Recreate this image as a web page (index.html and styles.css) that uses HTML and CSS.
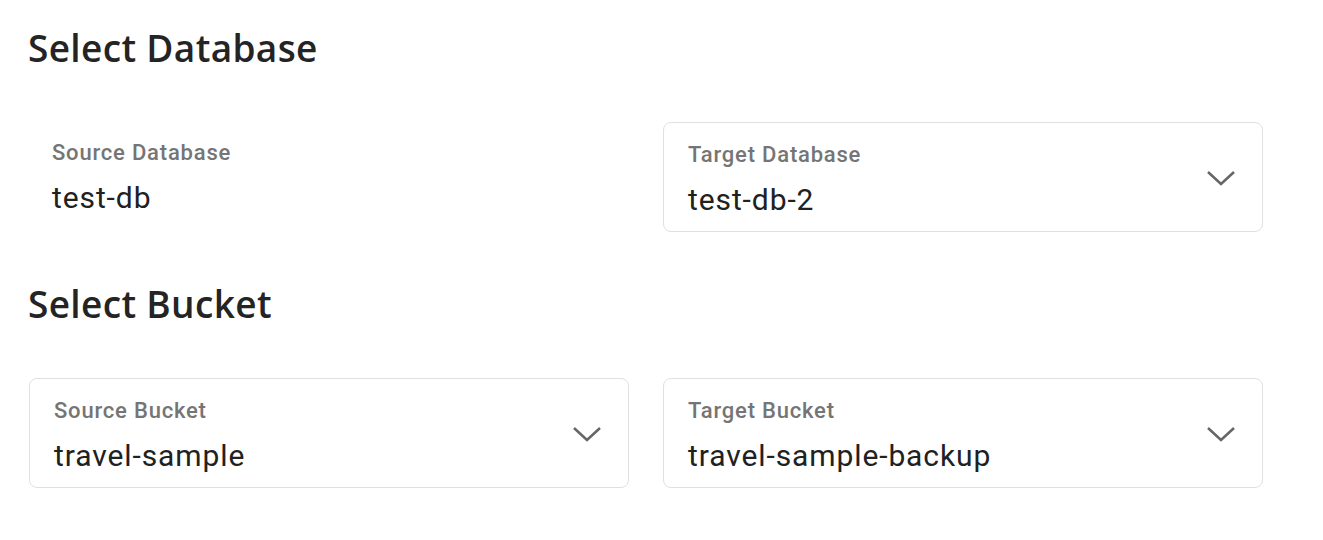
FILE: index.html
```html
<!DOCTYPE html>
<html lang="en">
<head>
    <meta charset="UTF-8">
    <meta name="viewport" content="width=device-width, initial-scale=1.0">
    <title>Select Database</title>
    <link rel="stylesheet" href="styles.css">
</head>
<body>
    <div class="page">
        <!-- Database -->
        <h2 class="section-title">Select Database</h2>
        <div class="row">
            <div class="field field-static">
                <div class="field-text">
                    <span class="field-label">Source Database</span>
                    <span class="field-value">test-db</span>
                </div>
            </div>
            <div class="field field-select">
                <div class="field-text">
                    <span class="field-label">Target Database</span>
                    <span class="field-value">test-db-2</span>
                </div>
                <svg class="chevron" width="30" height="16" viewBox="0 0 30 16"><path d="M2 2 L15 14 L28 2" fill="none" stroke="#666" stroke-width="2.5"/></svg>
            </div>
        </div>

        <!-- Bucket -->
        <h2 class="section-title">Select Bucket</h2>
        <div class="row">
            <div class="field field-select">
                <div class="field-text">
                    <span class="field-label">Source Bucket</span>
                    <span class="field-value">travel-sample</span>
                </div>
                <svg class="chevron" width="30" height="16" viewBox="0 0 30 16"><path d="M2 2 L15 14 L28 2" fill="none" stroke="#666" stroke-width="2.5"/></svg>
            </div>
            <div class="field field-select">
                <div class="field-text">
                    <span class="field-label">Target Bucket</span>
                    <span class="field-value">travel-sample-backup</span>
                </div>
                <svg class="chevron" width="30" height="16" viewBox="0 0 30 16"><path d="M2 2 L15 14 L28 2" fill="none" stroke="#666" stroke-width="2.5"/></svg>
            </div>
        </div>
    </div>
</body>
</html>
```

FILE: styles.css
```css
body {
    margin: 0;
    background: #fff;
    font-family: Roboto, Arial, sans-serif;
}
.page {
    padding: 24px 0 0 28px;
}
.section-title {
    margin: 0;
    font-family: "Open Sans", "Noto Sans", sans-serif;
    font-weight: 600;
    font-size: 37px;
    line-height: 48px;
    letter-spacing: 0.35px;
    color: #242424;
}
.row {
    display: grid;
    grid-template-columns: 600px 600px;
    column-gap: 34px;
    margin: 50px 0 48px 1px;
}
.field {
    height: 110px;
    box-sizing: border-box;
    border: 1px solid #e0e0e0;
    border-radius: 8px;
    display: flex;
    align-items: center;
    padding: 6px 26px 0 24px;
}
.field-static {
    border-color: transparent;
    padding-left: 22px;
    align-items: flex-start;
    padding-top: 17px;
}
.field-text {
    flex: 1;
    display: flex;
    flex-direction: column;
}
.field-label {
    font-size: 22px;
    font-weight: 500;
    line-height: 26px;
    letter-spacing: 0.8px;
    color: #757575;
}
.field-value {
    margin-top: 14px;
    font-size: 30px;
    line-height: 36px;
    letter-spacing: 0.9px;
    color: #212121;
}
.chevron {
    flex: none;
    margin-bottom: 5px;
}
```
